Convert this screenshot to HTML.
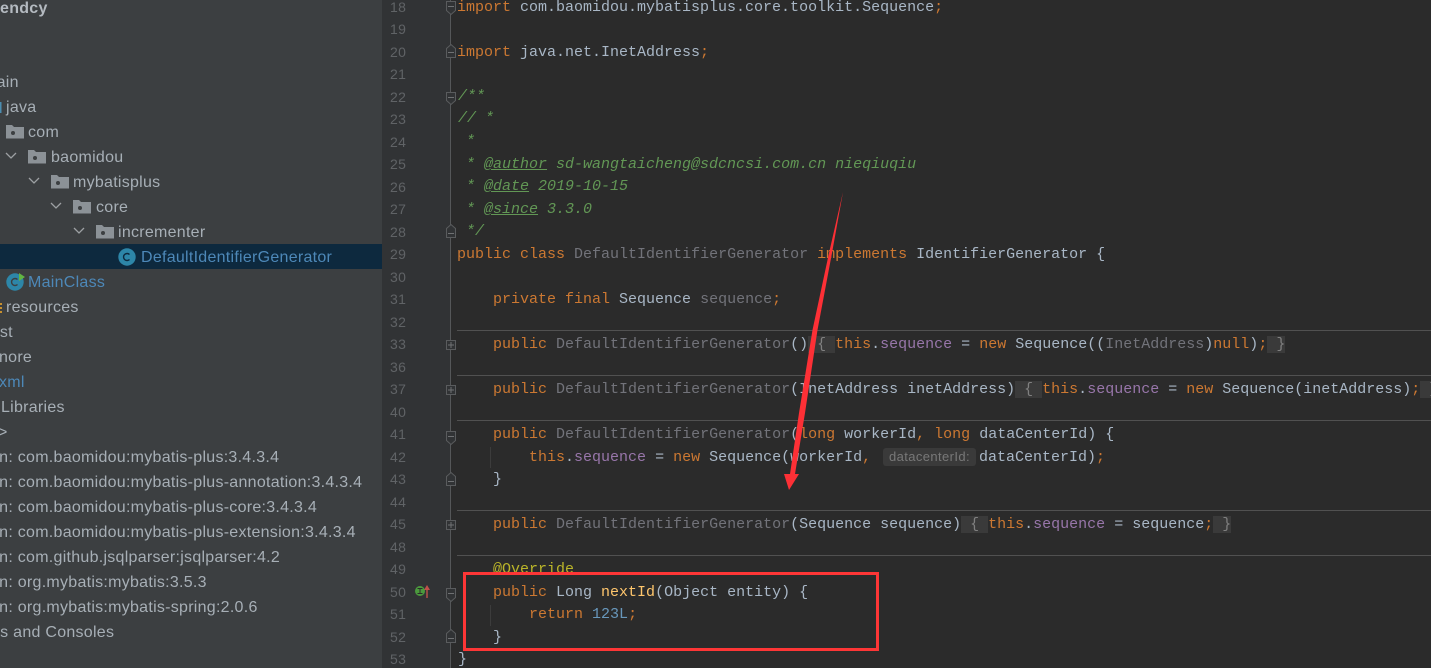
<!DOCTYPE html>
<html><head><meta charset="utf-8"><style>
html,body{margin:0;padding:0;background:#2b2b2b}
#p{position:relative;width:1431px;height:668px;overflow:hidden;background:#2b2b2b}
#side{position:absolute;left:0;top:0;width:382px;height:668px;background:#3c3f41;overflow:hidden}
#gut{position:absolute;left:382px;top:0;width:68px;height:668px;background:#313335}
#foldline{position:absolute;left:450px;top:0;width:1px;height:668px;background:#555759}
.s{position:absolute;height:25px;margin-top:1px;font:16px/25px "Liberation Sans",sans-serif;letter-spacing:.27px;color:#a7afb6;white-space:pre}
.b{color:#4d88b8}
#sel{position:absolute;left:0;top:244px;width:382px;height:25px;background:#0d293e}
.n{position:absolute;left:390px;width:30px;height:22px;font:14px/22px "Liberation Sans",sans-serif;color:#606366;letter-spacing:.3px}
.c{position:absolute;left:457px;height:22px;font:15px/22px "Liberation Mono",monospace;color:#a9b7c6;white-space:pre}
.k{color:#cc7832}.d{color:#72737a}.g{color:#629755;font-style:italic}.u{text-decoration:underline}.f{color:#9876aa}.m{color:#ffc66d}.h{color:#6897bb}.a{color:#bbb529}
.x{background:#3a3a3a;color:#808080}.y{color:#7d7d7d}
.sep{position:absolute;left:457px;right:0;height:1px;background:#515151}
svg{position:absolute;left:0;top:0}
</style></head><body><div id="p">
<div id="side">
<div id="sel"></div>
<div class="s" style="left:-10px;top:-5px;font-weight:bold;color:#b4bac0">pendcy</div>
<div class="s" style="left:-17px;top:69px">main</div>
<div class="s" style="left:6px;top:94px">java</div>
<div class="s" style="left:28px;top:119px">com</div>
<div class="s" style="left:51px;top:144px">baomidou</div>
<div class="s" style="left:73px;top:169px">mybatisplus</div>
<div class="s" style="left:96px;top:194px">core</div>
<div class="s" style="left:118px;top:219px">incrementer</div>
<div class="s b" style="left:141px;top:244px">DefaultIdentifierGenerator</div>
<div class="s b" style="left:28px;top:269px">MainClass</div>
<div class="s" style="left:6px;top:294px">resources</div>
<div class="s" style="left:-14px;top:319px">test</div>
<div class="s" style="left:-1px;top:344px;">nore</div>
<div class="s b" style="left:-1px;top:369px">xml</div>
<div class="s" style="left:1px;top:394px">Libraries</div>
<div class="s" style="left:-2px;top:419px">&gt;</div>
<div class="s" style="left:-10px;top:444px">en: com.baomidou:mybatis-plus:3.4.3.4</div>
<div class="s" style="left:-10px;top:469px">en: com.baomidou:mybatis-plus-annotation:3.4.3.4</div>
<div class="s" style="left:-10px;top:494px">en: com.baomidou:mybatis-plus-core:3.4.3.4</div>
<div class="s" style="left:-10px;top:519px">en: com.baomidou:mybatis-plus-extension:3.4.3.4</div>
<div class="s" style="left:-10px;top:544px">en: com.github.jsqlparser:jsqlparser:4.2</div>
<div class="s" style="left:-10px;top:569px">en: org.mybatis:mybatis:3.5.3</div>
<div class="s" style="left:-10px;top:594px">en: org.mybatis:mybatis-spring:2.0.6</div>
<div class="s" style="left:-9px;top:619px">es and Consoles</div>
<svg width="382" height="668">
<g fill="#8c9297">
<path d="M6 125h6l2 2h10v11.500H6z"/><path d="M28 150h6l2 2h10v11.500H28z"/><path d="M51 175h6l2 2h10v11.500H51z"/><path d="M73 200h6l2 2h10v11.500H73z"/><path d="M96 225h6l2 2h10v11.500H96z"/>
</g>
<g fill="#3c3f41"><circle cx="13" cy="133" r="2"/><circle cx="35" cy="158" r="2"/><circle cx="58" cy="183" r="2"/><circle cx="80" cy="208" r="2"/><circle cx="103" cy="233" r="2"/></g>
<g fill="none" stroke="#9da0a3" stroke-width="1.3"><path d="M6 153l5 5 5-5"/><path d="M29 178l5 5 5-5"/><path d="M51 203l5 5 5-5"/><path d="M74 228l5 5 5-5"/></g>
<circle cx="127" cy="257" r="8.700" fill="#2d86a8"/>
<path d="M129.500 254.500a3.500 3.500 0 1 0 0 5" fill="none" stroke="#0d293e" stroke-width="1.400"/>
<circle cx="15" cy="282" r="8.700" fill="#2d86a8"/>
<path d="M17.500 279.500a3.500 3.500 0 1 0 0 5" fill="none" stroke="#3c3f41" stroke-width="1.400"/>
<path d="M19 273l6 4-6 4z" fill="#62b543"/>
<rect x="0" y="102" width="1.500" height="11" fill="#4b8db0"/>
<g fill="#c7902e"><rect x="0" y="303" width="2" height="2"/><rect x="0" y="307" width="2" height="2"/><rect x="0" y="311" width="2" height="2"/></g>
</svg>
</div>
<div id="gut"></div><div id="foldline"></div>
<div class="n" style="top:-4px">18</div>
<div class="n" style="top:18px">19</div>
<div class="n" style="top:41px">20</div>
<div class="n" style="top:63px">21</div>
<div class="n" style="top:86px">22</div>
<div class="n" style="top:108px">23</div>
<div class="n" style="top:131px">24</div>
<div class="n" style="top:153px">25</div>
<div class="n" style="top:176px">26</div>
<div class="n" style="top:198px">27</div>
<div class="n" style="top:221px">28</div>
<div class="n" style="top:243px">29</div>
<div class="n" style="top:266px">30</div>
<div class="n" style="top:288px">31</div>
<div class="n" style="top:311px">32</div>
<div class="n" style="top:333px">33</div>
<div class="n" style="top:356px">36</div>
<div class="n" style="top:378px">37</div>
<div class="n" style="top:401px">40</div>
<div class="n" style="top:423px">41</div>
<div class="n" style="top:446px">42</div>
<div class="n" style="top:468px">43</div>
<div class="n" style="top:491px">44</div>
<div class="n" style="top:513px">45</div>
<div class="n" style="top:536px">48</div>
<div class="n" style="top:558px">49</div>
<div class="n" style="top:581px">50</div>
<div class="n" style="top:603px">51</div>
<div class="n" style="top:626px">52</div>
<div class="n" style="top:648px">53</div>

<div class="sep" style="top:330px"></div><div class="sep" style="top:375px"></div><div class="sep" style="top:420px"></div><div class="sep" style="top:510px"></div><div class="sep" style="top:555px"></div>

<div class="c" style="top:-3px"><span class="k">import</span> com.baomidou.mybatisplus.core.toolkit.Sequence<span class="k">;</span></div>
<div class="c" style="top:42px"><span class="k">import</span> java.net.InetAddress<span class="k">;</span></div>
<div class="c g" style="top:86px;left:458px">/**</div>
<div class="c g" style="top:108px;left:458px">// *</div>
<div class="c g" style="top:131px"> *</div>
<div class="c g" style="top:154px"> * <span class="u">@author</span> sd-wangtaicheng@sdcncsi.com.cn nieqiuqiu</div>
<div class="c g" style="top:176px"> * <span class="u">@date</span> 2019-10-15</div>
<div class="c g" style="top:199px"> * <span class="u">@since</span> 3.3.0</div>
<div class="c g" style="top:221px"> */</div>
<div class="c" style="top:244px"><span class="k">public class</span> <span class="d">DefaultIdentifierGenerator</span> <span class="k">implements</span> IdentifierGenerator {</div>
<div class="c" style="top:289px">    <span class="k">private final</span> Sequence <span class="d">sequence</span><span class="k">;</span></div>
<div class="c" style="top:334px">    <span class="k">public</span> <span class="d">DefaultIdentifierGenerator</span>()<span class="x"> { </span><span class="k">this</span>.<span class="f">sequence</span> = <span class="k">new</span> Sequence((<span class="d">InetAddress</span>)<span class="k">null</span>)<span class="k">;</span><span class="x"> }</span></div>
<div class="c" style="top:379px">    <span class="k">public</span> <span class="d">DefaultIdentifierGenerator</span>(InetAddress inetAddress)<span class="x"> { </span><span class="k">this</span>.<span class="f">sequence</span> = <span class="k">new</span> Sequence(inetAddress)<span class="k">;</span><span class="x"> }</span></div>
<div class="c" style="top:424px">    <span class="k">public</span> <span class="d">DefaultIdentifierGenerator</span>(<span class="k">long</span> workerId<span class="k">,</span> <span class="k">long</span> dataCenterId) {</div>
<div class="c" style="top:447px">        <span class="k">this</span>.<span class="f">sequence</span> = <span class="k">new</span> Sequence(workerId<span class="k">,</span></div>
<div style="position:absolute;left:883px;top:448px;width:93px;height:18px;background:#3a3a3a;border-radius:3px;font:13px/18px 'Liberation Sans',sans-serif;letter-spacing:.4px;color:#787878;text-align:center">datacenterId:</div>
<div class="c" style="left:979px;top:447px">dataCenterId)<span class="k">;</span></div>
<div class="c" style="top:469px">    }</div>
<div class="c" style="top:514px">    <span class="k">public</span> <span class="d">DefaultIdentifierGenerator</span>(Sequence sequence)<span class="x"> { </span><span class="k">this</span>.<span class="f">sequence</span> = sequence<span class="k">;</span><span class="x"> }</span></div>
<div class="c a" style="top:559px">    @Override</div>
<div class="c" style="top:582px">    <span class="k">public</span> Long <span class="m">nextId</span>(Object entity) {</div>
<div class="c" style="top:604px">        <span class="k">return</span> <span class="h">123L</span><span class="k">;</span></div>
<div class="c" style="top:627px">    }</div>
<div class="c" style="top:649px;left:458px">}</div>

<svg width="1431" height="668">
<g transform="translate(1 0)">
<g fill="#313335" stroke="#5a5c5e" stroke-width="1">
<path d="M445.500 1.500h9v9l-4.500 4-4.500-4z"/>
<path d="M445.500 57.500h9v-9l-4.500-4-4.500 4z"/>
<path d="M445.500 92.500h9v8l-4.500 4-4.500-4z"/>
<path d="M445.500 237.500h9v-9l-4.500-4-4.500 4z"/>
<path d="M445.500 431.500h9v9l-4.500 4-4.500-4z"/>
<path d="M445.500 485.500h9v-9l-4.500-4-4.500 4z"/>
<path d="M445.500 588.500h9v9l-4.500 4-4.500-4z"/>
<path d="M445.500 642.500h9v-9l-4.500-4-4.500 4z"/>
<rect x="445.500" y="340.500" width="9" height="9"/>
<rect x="445.500" y="385.500" width="9" height="9"/>
<rect x="445.500" y="520.500" width="9" height="9"/>
</g>
<path d="M447 6.500h6M447 52.500h6M447 97.500h6M447 233.500h6M447 436.500h6M447 481.500h6M447 593.500h6M447 638.500h6M447 345h6M450 342v6M447 390h6M450 387v6M447 525h6M450 522v6" stroke="#6f7173" stroke-width="1" fill="none"/>
</g>
<path d="M490.500 447v21M490.500 605v21" stroke="#3c3c3c" stroke-width="1"/>
<circle cx="420" cy="591" r="5" fill="#4b9a3d"/>
<path d="M417.500 588.500h5M417.500 593.500h5M420 588.500v5" stroke="#2b2b2b" stroke-width="1" fill="none"/>
<path d="M427 588v10" stroke="#b5504a" stroke-width="1.500"/><path d="M424 590l3-5 3 5z" fill="#c0504a"/>
<rect x="464.500" y="573.500" width="413" height="76" fill="none" stroke="#fd3636" stroke-width="3"/>
<path d="M843 192L832 253L817.500 330L805 413L795 474L799 474L789 490L784 474L790 474L799 413L812.500 330L829 253Z" fill="#fd3036"/>
</svg>
</div></body></html>
